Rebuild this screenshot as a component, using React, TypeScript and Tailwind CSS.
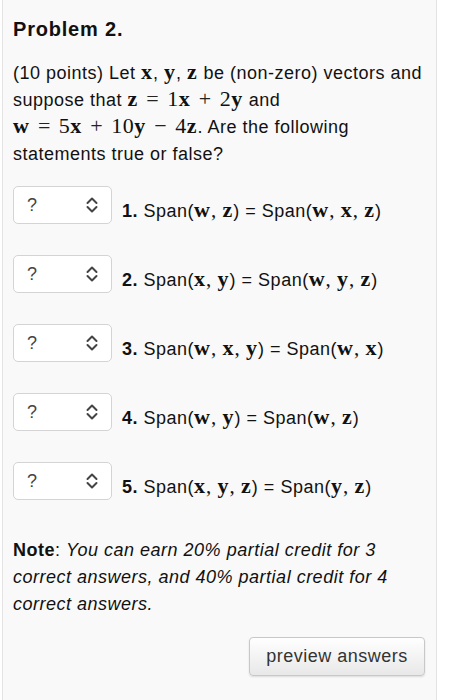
const sans = "font-['Helvetica','Liberation_Sans',Arial,sans-serif]";

function M({ children }: { children: React.ReactNode }) {
  return (
    <span className="font-['Liberation_Serif',serif] text-[22px] font-bold leading-none tracking-[1px]">{children}</span>
  );
}

function N({ children }: { children: React.ReactNode }) {
  return <span className="font-['Liberation_Serif',serif] text-[22px] leading-none tracking-[0.5px]">{children}</span>;
}

// operator with math spacing around it
function Op({ children }: { children: React.ReactNode }) {
  return (
    <span className="mx-[8px] font-['Liberation_Serif',serif] text-[22px] leading-none text-[#222]">{children}</span>
  );
}

function Chevrons() {
  return (
    <svg width="14" height="18" viewBox="0 0 14 18" fill="none" stroke="#444" strokeWidth="2" strokeLinecap="round" strokeLinejoin="round">
      <path d="M2.5 7 L7 2.5 L11.5 7" />
      <path d="M2.5 11 L7 15.5 L11.5 11" />
    </svg>
  );
}

function QSelect() {
  return (
    <div className="flex h-[38px] w-[99px] shrink-0 items-center justify-between rounded-[5px] border border-[#d4d4d4] bg-white pl-[13px] pr-[12px] text-[18px] text-[#444]">
      <span>?</span>
      <Chevrons />
    </div>
  );
}

const rows: { n: number; left: string[]; right: string[] }[] = [
  { n: 1, left: ["w", "z"], right: ["w", "x", "z"] },
  { n: 2, left: ["x", "y"], right: ["w", "y", "z"] },
  { n: 3, left: ["w", "x", "y"], right: ["w", "x"] },
  { n: 4, left: ["w", "y"], right: ["w", "z"] },
  { n: 5, left: ["x", "y", "z"], right: ["y", "z"] },
];

function SpanOf({ vars }: { vars: string[] }) {
  return (
    <>
      Span(
      {vars.map((v, i) => (
        <span key={i}>
          <M>{v}</M>
          {i < vars.length - 1 && <span className="font-['Liberation_Serif',serif] text-[21px] leading-none">, </span>}
        </span>
      ))}
      )
    </>
  );
}

export default function App() {
  return (
    <div className={`min-h-[700px] bg-white pl-[2px] pr-[12px] ${sans} text-[18px] tracking-[0.5px] text-[#111]`}>
      <div className="min-h-[700px] border-x border-[#e3e3e3] bg-[#f9f9f9] pl-[10px] pr-[10px] pt-[16px]">
        <h2 className="text-[20px] font-bold leading-[27px] tracking-[0.8px]">Problem 2.</h2>

        <p className="mt-[17px] leading-[27px]">
          (10 points) Let <M>x</M>, <M>y</M>, <M>z</M> be (non-zero) vectors and suppose that{" "}
          <M>z</M>
          <Op>=</Op>
          <N>1</N>
          <M>x</M>
          <Op>+</Op>
          <N>2</N>
          <M>y</M> and
          <br />
          <M>w</M>
          <Op>=</Op>
          <N>5</N>
          <M>x</M>
          <Op>+</Op>
          <N>10</N>
          <M>y</M>
          <Op>−</Op>
          <N>4</N>
          <M>z</M>. Are the following statements true or false?
        </p>

        <div className="mt-[18px] flex flex-col gap-[30px]">
          {rows.map((r) => (
            <div key={r.n} className="flex items-start gap-[10px]">
              <QSelect />
              <div className="mt-[12px] leading-[27px]">
                <b>{r.n}.</b> <SpanOf vars={r.left} /> = <SpanOf vars={r.right} />
              </div>
            </div>
          ))}
        </div>

        <p className="mt-[36px] leading-[27px]">
          <b>Note</b>: <i>You can earn 20% partial credit for 3 correct answers, and 40% partial credit for 4 correct answers.</i>
        </p>

        <div className="mt-[19px] flex justify-end pr-[1px]">
          <button className="h-[39px] w-[176px] rounded-[4px] border border-[#c8c8c8] bg-gradient-to-b from-white to-[#e8e8e8] text-[18px] tracking-[0.5px] text-[#333] shadow-[0_1px_2px_rgba(0,0,0,0.12)]">
            preview answers
          </button>
        </div>
      </div>
    </div>
  );
}
